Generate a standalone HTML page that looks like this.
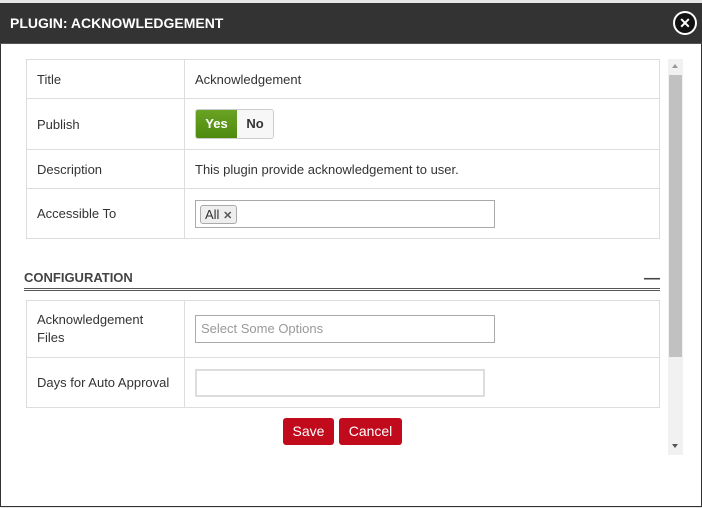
<!DOCTYPE html>
<html><head><style>
*{box-sizing:border-box;margin:0;padding:0}
body{width:702px;height:508px;background:#e6e6e6;font-family:"Liberation Sans",Arial,sans-serif;font-size:13px;color:#333;position:relative;overflow:hidden}
.hdr{position:absolute;left:0;top:3px;width:702px;height:40px;background:#333;color:#fff;font-weight:bold;font-size:14px;line-height:40px;padding-left:10px}
.body{position:absolute;left:0;top:43px;width:702px;height:464px;background:#fff;border:1px solid #333;border-top:1px solid #555}
.close{position:absolute;right:6px;top:10px;width:23px;height:23px;border-radius:50%;background:#fff;border:2px solid #222;box-shadow:0 0 0 1px #fff}
.close span{position:absolute;left:0;top:0;width:19px;height:19px;border-radius:50%;background:#111;margin:0}
table{position:absolute;left:26px;width:634px;border-collapse:collapse}
td{border:1px solid #ddd;padding:0 10px;vertical-align:middle}
td.l{width:158px}
.sw{display:inline-flex;border:1px solid #ccc;border-radius:3px;height:30px;overflow:hidden;font-weight:bold}
.sw .y{background:linear-gradient(#6aa323,#4e8a0e);color:#fff;width:41px;text-align:center;line-height:28px}
.sw .n{background:#f7f7f7;color:#333;width:36px;text-align:center;line-height:28px}
.inp{border:1px solid #aaa;height:28px;width:300px;position:relative}
.tag{position:absolute;left:4px;top:4px;height:19px;border:1px solid #aaa;border-radius:3px;background:#eee;padding:0 4px;line-height:17px;font-size:13px}
.cfg{position:absolute;left:24px;top:270px;width:636px;font-weight:bold;font-size:13px;color:#444;height:21px;border-bottom:3px double #555}
.btn{position:absolute;top:418px;height:27px;background:#c10a1c;color:#fff;border-radius:3px;line-height:27px;text-align:center;font-size:14px}
.sb{position:absolute;left:668px;top:59px;width:15px;height:396px;background:#f1f1f1}
.th{position:absolute;left:1px;top:16px;width:13px;height:282px;background:#c1c1c1}
</style></head><body>
<div class="hdr">PLUGIN: ACKNOWLEDGEMENT</div>
<div style="position:absolute;right:5px;top:11px;width:24px;height:24px;border-radius:50%;background:#fff"></div>
<div style="position:absolute;right:7px;top:13px;width:20px;height:20px;border-radius:50%;background:#111;color:#fff;font-weight:bold;font-size:14px;line-height:20px;text-align:center">✕</div>
<div class="body"></div>
<table style="top:59px">
<tr style="height:39px"><td class="l">Title</td><td>Acknowledgement</td></tr>
<tr style="height:51px"><td class="l">Publish</td><td><div class="sw"><div class="y">Yes</div><div class="n">No</div></div></td></tr>
<tr style="height:39px"><td class="l">Description</td><td>This plugin provide acknowledgement to user.</td></tr>
<tr style="height:50px"><td class="l">Accessible To</td><td><div class="inp"><span class="tag">All <b style="color:#555;font-size:11px">✕</b></span></div></td></tr>
</table>
<div class="cfg">CONFIGURATION<span style="position:absolute;right:0;top:0;font-size:16px">—</span></div>
<table style="top:300px">
<tr style="height:57px"><td class="l" style="line-height:18px">Acknowledgement<br>Files</td><td><div class="inp" style="color:#999;line-height:26px;padding-left:5px">Select Some Options</div></td></tr>
<tr style="height:50px"><td class="l">Days for Auto Approval</td><td><div class="inp" style="width:290px;border:2px solid #ddd"></div></td></tr>
</table>
<div class="btn" style="left:283px;width:51px">Save</div>
<div class="btn" style="left:339px;width:63px">Cancel</div>
<div class="sb"><div class="th"></div>
<div style="position:absolute;left:4px;top:5px;border:3px solid transparent;border-bottom:4px solid #999;border-top:0"></div>
<div style="position:absolute;left:4px;top:385px;border:3px solid transparent;border-top:4px solid #555;border-bottom:0"></div></div>
</body></html>
